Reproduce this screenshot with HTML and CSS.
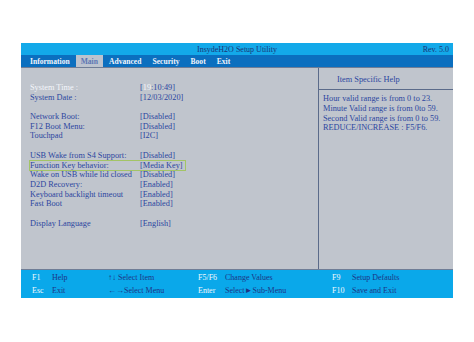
FILE: index.html
```html
<!DOCTYPE html>
<html>
<head>
    <link rel="stylesheet" href="styles.css">
</head>
<body>
    <div class="bios">
        <div class="title-bar">
            <span class="title">InsydeH2O Setup Utility</span>
            <span class="rev">Rev. 5.0</span>
        </div>
        <div class="menu-bar">
            <span class="menu-item">Information</span>
            <span class="menu-item active">Main</span>
            <span class="menu-item">Advanced</span>
            <span class="menu-item">Security</span>
            <span class="menu-item">Boot</span>
            <span class="menu-item">Exit</span>
        </div>
        <div class="content">
            <div class="settings">
                <div class="row selected"><span>System Time :</span><span class="value">[<span class="hl">19</span>:10:49]</span></div>
                <div class="row"><span>System Date :</span><span class="value">[12/03/2020]</span></div>
                <div class="row spacer"></div>
                <div class="row"><span>Network Boot:</span><span class="value">[Disabled]</span></div>
                <div class="row"><span>F12 Boot Menu:</span><span class="value">[Disabled]</span></div>
                <div class="row"><span>Touchpad</span><span class="value">[I2C]</span></div>
                <div class="row spacer"></div>
                <div class="row"><span>USB Wake from S4 Support:</span><span class="value">[Disabled]</span></div>
                <div class="row focus"><span>Function Key behavior:</span><span class="value">[Media Key]</span></div>
                <div class="row"><span>Wake on USB while lid closed</span><span class="value">[Disabled]</span></div>
                <div class="row"><span>D2D Recovery:</span><span class="value">[Enabled]</span></div>
                <div class="row"><span>Keyboard backlight timeout</span><span class="value">[Enabled]</span></div>
                <div class="row"><span>Fast Boot</span><span class="value">[Enabled]</span></div>
                <div class="row spacer"></div>
                <div class="row"><span>Display Language</span><span class="value">[English]</span></div>
            </div>
            <div class="help">
                <div class="help-title">Item Specific Help</div>
                <div class="help-text">
                    <p>Hour valid range is from 0 to 23.</p>
                    <p>Minute Valid range is from 0to 59.</p>
                    <p>Second Valid range is from 0 to 59.</p>
                    <p>REDUCE/INCREASE : F5/F6.</p>
                </div>
            </div>
        </div>
        <div class="footer">
            <span class="key">F1</span><span class="desc">Help</span>
            <span class="desc">↑↓ Select Item</span>
            <span class="key">F5/F6</span><span class="desc">Change Values</span>
            <span class="key">F9</span><span class="desc">Setup Defaults</span>

            <span class="key">Esc</span><span class="desc">Exit</span>
            <span class="desc">←→Select Menu</span>
            <span class="key">Enter</span><span class="desc">Select►Sub-Menu</span>
            <span class="key">F10</span><span class="desc">Save and Exit</span>
        </div>
    </div>
</body>
</html>
```

FILE: styles.css
```css
body {
    margin: 0;
    padding: 43px 0 0 21px;
    background: white;
    font-family: "Liberation Serif", "Times New Roman", serif;
    font-size: 8.3px;
}
.bios {
    width: 432px;
}
.title-bar {
    height: 12px;
    background: #13a9e9;
    color: #1c3476;
    display: flex;
    align-items: center;
    justify-content: center;
    position: relative;
    font-size: 8px;
}
.rev {
    position: absolute;
    right: 4px;
}
.menu-bar {
    height: 12px;
    background: #0b6fbf;
    display: flex;
    align-items: stretch;
    gap: 1px;
    padding-left: 4px;
}
.menu-item {
    color: #f2f5fb;
    font-weight: bold;
    font-size: 7.6px;
    padding: 0 5px;
    display: flex;
    align-items: center;
}
.menu-item.active {
    background: #bcc3ce;
    color: #5b76b4;
}
.content {
    height: 201px;
    background: #c0c5cd;
    border-top: 1px solid #6f7d96;
    border-bottom: 1px solid #6f7d96;
    display: flex;
    color: #2c46a0;
}
.settings {
    width: 298px;
    border-right: 1px solid #5b6b8a;
    padding: 15px 0 0 9px;
    box-sizing: border-box;
}
.row {
    display: grid;
    grid-template-columns: 110px max-content;
    width: fit-content;
    height: 9.7px;
    line-height: 9.7px;
    white-space: nowrap;
}
.row.selected > span:first-child {
    color: #f4f6fb;
}
.hl {
    color: #f4f6fb;
}
.row.focus {
    outline: 1px solid #a3c466;
    outline-offset: 0;
    padding-right: 2px;
}
.help {
    flex: 1;
}
.help-title {
    height: 21px;
    line-height: 24px;
    padding-left: 18px;
    border-bottom: 1px solid #5b6b8a;
}
.help-text {
    padding: 4px 0 0 4px;
}
.help-text p {
    margin: 0;
    line-height: 9.8px;
}
.footer {
    height: 28px;
    background: #0aa8ea;
    display: grid;
    grid-template-columns: 20px 56px 90px 27px 107px 20px 1fr;
    grid-template-rows: 13px 13px;
    align-items: center;
    padding: 1px 0 0 11px;
    box-sizing: border-box;
    font-size: 8px;
    white-space: nowrap;
}
.key {
    color: #f4f8fc;
}
.desc {
    color: #1d3586;
}
```
